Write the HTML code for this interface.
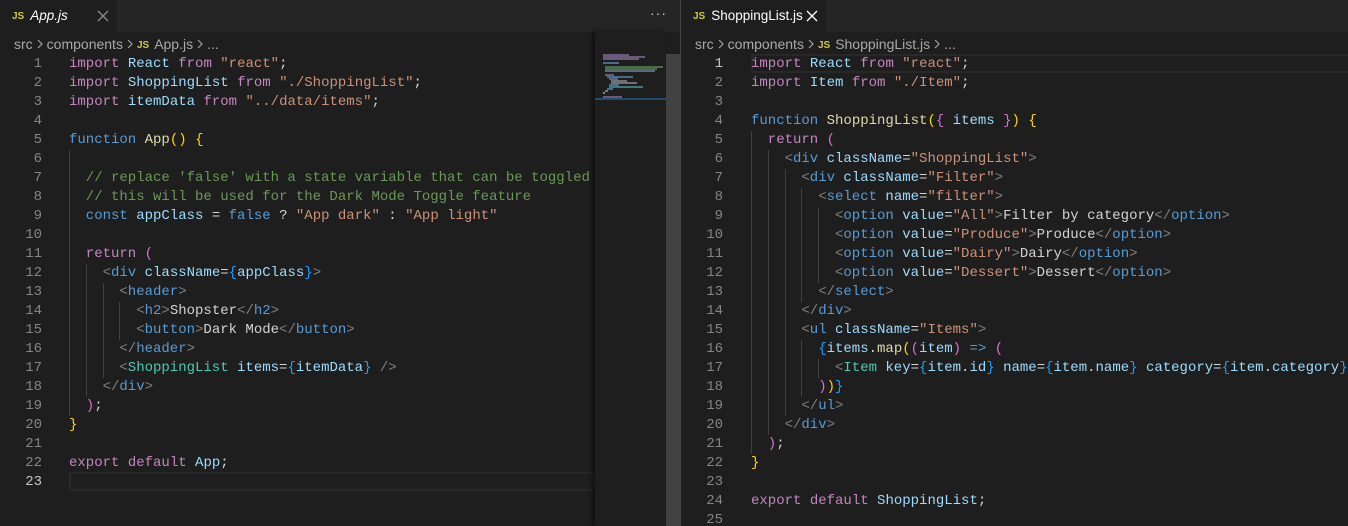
<!DOCTYPE html>
<html><head><meta charset="utf-8"><style>
*{margin:0;padding:0;box-sizing:border-box}
body{width:1348px;height:526px;background:#1e1e1e;overflow:hidden;position:relative;font-family:"Liberation Sans",sans-serif}
.pane{position:absolute;top:0;height:526px;overflow:hidden;background:#1e1e1e}
.tabbar{position:absolute;left:0;top:0;right:0;height:32px;background:#252526}
.tab{position:absolute;top:0;height:32px;background:#1e1e1e;font-size:13.5px;color:#fff;line-height:32px;padding-left:12px;white-space:nowrap}
.js{color:#cbcb41;font-weight:bold;font-size:10px;margin-right:6px;vertical-align:1px}
.x{position:absolute;top:10px}
.bc{position:absolute;top:35px;font-size:14px;color:#a9a9a9;white-space:nowrap;line-height:18px}
.bc .js{font-size:10px;margin:0 5px 0 0}
.ch{display:inline-block;width:14px;height:14px;vertical-align:-2px}
.code{position:absolute;top:55px;font-family:"Liberation Mono",monospace;font-size:14px;line-height:19px;white-space:pre;color:#d4d4d4}
.ln{position:absolute;top:55px;font-family:"Liberation Mono",monospace;font-size:14px;line-height:19px;color:#858585;text-align:right;white-space:pre}
.ln b{font-weight:normal;color:#c6c6c6}
.g{display:inline-block;width:2ch;height:19px;vertical-align:top;box-shadow:inset 1px 0 #404040}
.k{color:#c586c0}.b{color:#569cd6}.v{color:#9cdcfe}.s{color:#ce9178}.c{color:#6a9955}.t{color:#4ec9b0}.f{color:#dcdcaa}.p{color:#808080}.y{color:#ffd700}.m{color:#da70d6}.l{color:#179fff}
.cur{position:absolute;height:19px;border:2px solid #282828}
.mm{position:absolute;height:2px}
</style></head><body>

<!-- LEFT PANE -->
<div class="pane" style="left:0;width:680px">
  <div class="tabbar"></div>
  <div class="tab" style="left:0;width:117px"><span class="js">JS</span><i>App.js</i><svg class="x" style="left:97px" width="12" height="12" viewBox="0 0 12 12"><path d="M1 1L11 11M11 1L1 11" stroke="#8b8b8b" stroke-width="1.3"/></svg></div>
  <div style="position:absolute;left:650px;top:5px;color:#ccc;font-size:14px;letter-spacing:1px">···</div>
  <div class="bc" style="left:14px">src<svg class="ch" viewBox="0 0 14 14"><path d="M5 3L9 7L5 11" stroke="#a9a9a9" fill="none" stroke-width="1.1"/></svg>components<svg class="ch" viewBox="0 0 14 14"><path d="M5 3L9 7L5 11" stroke="#a9a9a9" fill="none" stroke-width="1.1"/></svg><span class="js">JS</span>App.js<svg class="ch" viewBox="0 0 14 14"><path d="M5 3L9 7L5 11" stroke="#a9a9a9" fill="none" stroke-width="1.1"/></svg>...</div>
  <div class="cur" style="left:69px;top:472px;width:526px"></div>
  <div class="ln" style="left:0;width:42px">1
2
3
4
5
6
7
8
9
10
11
12
13
14
15
16
17
18
19
20
21
22
<b>23</b></div>
  <div class="code" style="left:69px;width:526px;overflow:hidden"><span class="k">import</span> <span class="v">React</span> <span class="k">from</span> <span class="s">"react"</span>;
<span class="k">import</span> <span class="v">ShoppingList</span> <span class="k">from</span> <span class="s">"./ShoppingList"</span>;
<span class="k">import</span> <span class="v">itemData</span> <span class="k">from</span> <span class="s">"../data/items"</span>;

<span class="b">function</span> <span class="f">App</span><span class="y">()</span> <span class="y">{</span>
<span class="g"></span>
<span class="g"></span><span class="c">// replace 'false' with a state variable that can be toggled</span>
<span class="g"></span><span class="c">// this will be used for the Dark Mode Toggle feature</span>
<span class="g"></span><span class="b">const</span> <span class="v">appClass</span> = <span class="b">false</span> ? <span class="s">"App dark"</span> : <span class="s">"App light"</span>
<span class="g"></span>
<span class="g"></span><span class="k">return</span> <span class="m">(</span>
<span class="g"></span><span class="g"></span><span class="p">&lt;</span><span class="b">div</span> <span class="v">className</span>=<span class="l">{</span><span class="v">appClass</span><span class="l">}</span><span class="p">&gt;</span>
<span class="g"></span><span class="g"></span><span class="g"></span><span class="p">&lt;</span><span class="b">header</span><span class="p">&gt;</span>
<span class="g"></span><span class="g"></span><span class="g"></span><span class="g"></span><span class="p">&lt;</span><span class="b">h2</span><span class="p">&gt;</span>Shopster<span class="p">&lt;/</span><span class="b">h2</span><span class="p">&gt;</span>
<span class="g"></span><span class="g"></span><span class="g"></span><span class="g"></span><span class="p">&lt;</span><span class="b">button</span><span class="p">&gt;</span>Dark Mode<span class="p">&lt;/</span><span class="b">button</span><span class="p">&gt;</span>
<span class="g"></span><span class="g"></span><span class="g"></span><span class="p">&lt;/</span><span class="b">header</span><span class="p">&gt;</span>
<span class="g"></span><span class="g"></span><span class="g"></span><span class="p">&lt;</span><span class="t">ShoppingList</span> <span class="v">items</span>=<span class="l">{</span><span class="v">itemData</span><span class="l">}</span> <span class="p">/&gt;</span>
<span class="g"></span><span class="g"></span><span class="p">&lt;/</span><span class="b">div</span><span class="p">&gt;</span>
<span class="g"></span><span class="m">)</span>;
<span class="y">}</span>

<span class="k">export</span> <span class="k">default</span> <span class="v">App</span>;
</div>
  <!-- minimap -->
  <div style="position:absolute;left:595px;top:32px;width:71px;height:494px;background:#1e1e1e;box-shadow:-3px 0 4px #111"></div>
  <div class="mm" style="left:603px;top:54px;width:26px;background:#6a5a7a"></div>
  <div class="mm" style="left:603px;top:56px;width:42px;background:#6a5a7a"></div>
  <div class="mm" style="left:603px;top:58px;width:36px;background:#6a5a7a"></div>
  <div class="mm" style="left:603px;top:62px;width:16px;background:#4a6a8a"></div>
  <div class="mm" style="left:605px;top:66px;width:58px;background:#4a6a4a"></div>
  <div class="mm" style="left:605px;top:68px;width:52px;background:#4a6a4a"></div>
  <div class="mm" style="left:605px;top:70px;width:50px;background:#5a6a7a"></div>
  <div class="mm" style="left:605px;top:74px;width:9px;background:#6a5a7a"></div>
  <div class="mm" style="left:607px;top:76px;width:26px;background:#4a6a8a"></div>
  <div class="mm" style="left:609px;top:78px;width:9px;background:#4a6a8a"></div>
  <div class="mm" style="left:611px;top:80px;width:16px;background:#707070"></div>
  <div class="mm" style="left:611px;top:82px;width:26px;background:#707070"></div>
  <div class="mm" style="left:609px;top:84px;width:10px;background:#4a6a8a"></div>
  <div class="mm" style="left:609px;top:86px;width:34px;background:#3a7a7a"></div>
  <div class="mm" style="left:607px;top:88px;width:6px;background:#4a6a8a"></div>
  <div class="mm" style="left:605px;top:90px;width:3px;background:#777"></div>
  <div class="mm" style="left:603px;top:92px;width:2px;background:#887"></div>
  <div class="mm" style="left:603px;top:96px;width:19px;background:#6a5a7a"></div>
  <div class="mm" style="left:595px;top:98px;width:71px;background:#264a6a;height:2px"></div>
  <div style="position:absolute;left:666px;top:54px;width:14px;height:472px;background:#424242"></div>
</div>

<div style="position:absolute;left:680px;top:0;width:1px;height:526px;background:#444"></div>

<!-- RIGHT PANE -->
<div class="pane" style="left:681px;width:667px">
  <div class="tabbar"></div>
  <div class="tab" style="left:0;width:145px"><span class="js">JS</span>ShoppingList.js<svg class="x" style="left:125px" width="12" height="12" viewBox="0 0 12 12"><path d="M1 1L11 11M11 1L1 11" stroke="#fff" stroke-width="1.3"/></svg></div>
  <div class="bc" style="left:14px">src<svg class="ch" viewBox="0 0 14 14"><path d="M5 3L9 7L5 11" stroke="#a9a9a9" fill="none" stroke-width="1.1"/></svg>components<svg class="ch" viewBox="0 0 14 14"><path d="M5 3L9 7L5 11" stroke="#a9a9a9" fill="none" stroke-width="1.1"/></svg><span class="js">JS</span>ShoppingList.js<svg class="ch" viewBox="0 0 14 14"><path d="M5 3L9 7L5 11" stroke="#a9a9a9" fill="none" stroke-width="1.1"/></svg>...</div>
  <div class="cur" style="left:70px;top:54px;width:600px"></div>
  <div class="ln" style="left:0;width:42px"><b>1</b>
2
3
4
5
6
7
8
9
10
11
12
13
14
15
16
17
18
19
20
21
22
23
24
25</div>
  <div class="code" style="left:70px"><span class="k">import</span> <span class="v">React</span> <span class="k">from</span> <span class="s">"react"</span>;
<span class="k">import</span> <span class="v">Item</span> <span class="k">from</span> <span class="s">"./Item"</span>;

<span class="b">function</span> <span class="f">ShoppingList</span><span class="y">(</span><span class="m">{</span> <span class="v">items</span> <span class="m">}</span><span class="y">)</span> <span class="y">{</span>
<span class="g"></span><span class="k">return</span> <span class="m">(</span>
<span class="g"></span><span class="g"></span><span class="p">&lt;</span><span class="b">div</span> <span class="v">className</span>=<span class="s">"ShoppingList"</span><span class="p">&gt;</span>
<span class="g"></span><span class="g"></span><span class="g"></span><span class="p">&lt;</span><span class="b">div</span> <span class="v">className</span>=<span class="s">"Filter"</span><span class="p">&gt;</span>
<span class="g"></span><span class="g"></span><span class="g"></span><span class="g"></span><span class="p">&lt;</span><span class="b">select</span> <span class="v">name</span>=<span class="s">"filter"</span><span class="p">&gt;</span>
<span class="g"></span><span class="g"></span><span class="g"></span><span class="g"></span><span class="g"></span><span class="p">&lt;</span><span class="b">option</span> <span class="v">value</span>=<span class="s">"All"</span><span class="p">&gt;</span>Filter by category<span class="p">&lt;/</span><span class="b">option</span><span class="p">&gt;</span>
<span class="g"></span><span class="g"></span><span class="g"></span><span class="g"></span><span class="g"></span><span class="p">&lt;</span><span class="b">option</span> <span class="v">value</span>=<span class="s">"Produce"</span><span class="p">&gt;</span>Produce<span class="p">&lt;/</span><span class="b">option</span><span class="p">&gt;</span>
<span class="g"></span><span class="g"></span><span class="g"></span><span class="g"></span><span class="g"></span><span class="p">&lt;</span><span class="b">option</span> <span class="v">value</span>=<span class="s">"Dairy"</span><span class="p">&gt;</span>Dairy<span class="p">&lt;/</span><span class="b">option</span><span class="p">&gt;</span>
<span class="g"></span><span class="g"></span><span class="g"></span><span class="g"></span><span class="g"></span><span class="p">&lt;</span><span class="b">option</span> <span class="v">value</span>=<span class="s">"Dessert"</span><span class="p">&gt;</span>Dessert<span class="p">&lt;/</span><span class="b">option</span><span class="p">&gt;</span>
<span class="g"></span><span class="g"></span><span class="g"></span><span class="g"></span><span class="p">&lt;/</span><span class="b">select</span><span class="p">&gt;</span>
<span class="g"></span><span class="g"></span><span class="g"></span><span class="p">&lt;/</span><span class="b">div</span><span class="p">&gt;</span>
<span class="g"></span><span class="g"></span><span class="g"></span><span class="p">&lt;</span><span class="b">ul</span> <span class="v">className</span>=<span class="s">"Items"</span><span class="p">&gt;</span>
<span class="g"></span><span class="g"></span><span class="g"></span><span class="g"></span><span class="l">{</span><span class="v">items</span>.<span class="f">map</span><span class="y">(</span><span class="m">(</span><span class="v">item</span><span class="m">)</span> <span class="b">=&gt;</span> <span class="m">(</span>
<span class="g"></span><span class="g"></span><span class="g"></span><span class="g"></span><span class="g"></span><span class="p">&lt;</span><span class="t">Item</span> <span class="v">key</span>=<span class="l">{</span><span class="v">item</span>.<span class="v">id</span><span class="l">}</span> <span class="v">name</span>=<span class="l">{</span><span class="v">item</span>.<span class="v">name</span><span class="l">}</span> <span class="v">category</span>=<span class="l">{</span><span class="v">item</span>.<span class="v">category</span><span class="l">}</span> <span class="p">/&gt;</span>
<span class="g"></span><span class="g"></span><span class="g"></span><span class="g"></span><span class="m">)</span><span class="y">)</span><span class="l">}</span>
<span class="g"></span><span class="g"></span><span class="g"></span><span class="p">&lt;/</span><span class="b">ul</span><span class="p">&gt;</span>
<span class="g"></span><span class="g"></span><span class="p">&lt;/</span><span class="b">div</span><span class="p">&gt;</span>
<span class="g"></span><span class="m">)</span>;
<span class="y">}</span>

<span class="k">export</span> <span class="k">default</span> <span class="v">ShoppingList</span>;
</div>
</div>
</body></html>
